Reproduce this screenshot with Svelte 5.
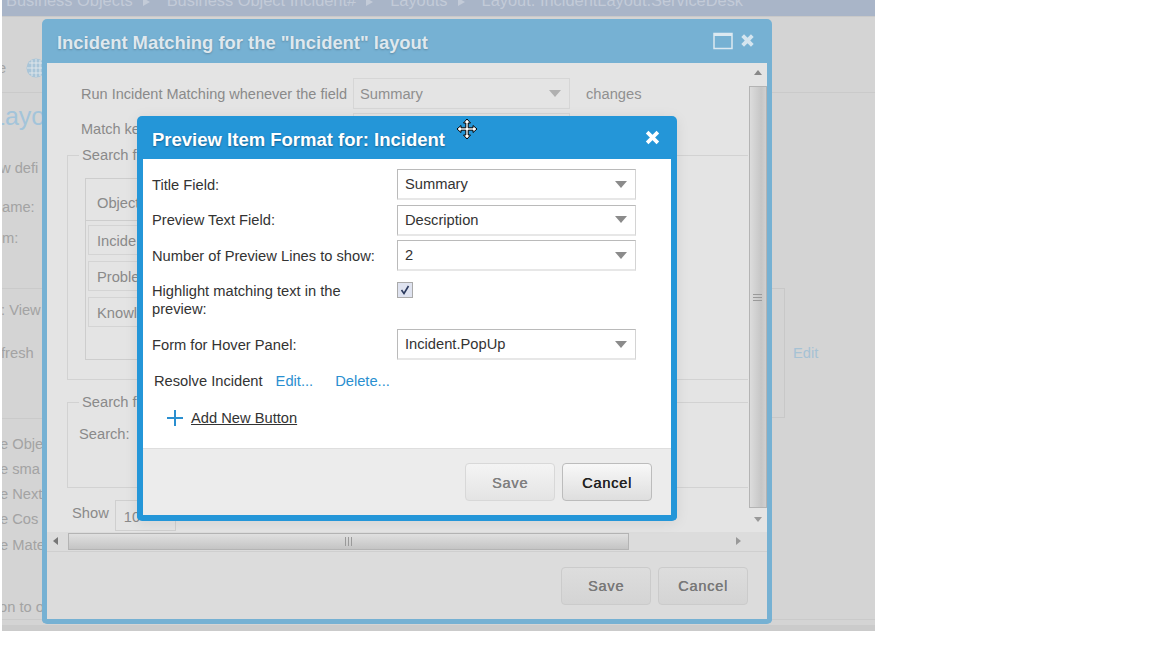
<script>
  const sideRows = [
    { text: 'e Obje', top: 436 },
    { text: 'e sma', top: 461 },
    { text: 'e Next', top: 486 },
    { text: 'e Cos', top: 511 },
    { text: 'e Mate', top: 537 }
  ];
  const objects = ['Incide', 'Proble', 'Knowl'];
  const selects = [
    { label: 'Title Field:', value: 'Summary' },
    { label: 'Preview Text Field:', value: 'Description' },
    { label: 'Number of Preview Lines to show:', value: '2' }
  ];
</script>

<div class="stage">
  <div class="crumbs">
    <span>Business Objects</span><i class="sep"></i>
    <span>Business Object Incident#</span><i class="sep"></i>
    <span>Layouts</span><i class="sep"></i>
    <span>Layout: IncidentLayout.ServiceDesk</span>
  </div>
  <div class="rule r1"></div>
  <div class="back-e bg">e</div>
  <svg class="globe" viewBox="0 0 20 20"><circle cx="10" cy="10" r="9.500" fill="#a9c5d8"/><path d="M1 10h18M10 1v18M3 5h14M3 15h14M6 2v16M14 2v16" stroke="#dfe6ea" stroke-width="1" fill="none"/></svg>
  <div class="bg layo">Layo</div>
  <div class="bg t1">w defi</div>
  <div class="bg t2">ame:</div>
  <div class="bg t3">m:</div>
  <div class="bg t4">: View</div>
  <div class="bg t5">fresh</div>
  <div class="rule r2"></div>
  <div class="rule r3"></div>
  {#each sideRows as row}
    <div class="bg side" style="top:{row.top}px">{row.text}</div>
  {/each}
  <div class="bg t6">on to o</div>
  <div class="band"></div>
  <div class="edit-box"></div>
  <div class="bg edit-link">Edit</div>

  <section class="dialog outer">
    <header class="outer-head">
      <h2>Incident Matching for the "Incident" layout</h2>
      <svg class="max" viewBox="0 0 20 18"><path d="M1 1.500h18v15H1z" fill="none" stroke="#dce9f1" stroke-width="1.500"/><path d="M1 3h18" stroke="#dce9f1" stroke-width="2"/></svg>
      <svg class="x dim" viewBox="0 0 14 14"><path d="M2.500 2.500l9 9M11.500 2.500l-9 9" stroke="#d5e5ef" stroke-width="3.600"/></svg>
    </header>
    <div class="outer-main">
      <div class="scroll-area">
        <div class="line first">
          <span class="lab">Run Incident Matching whenever the field</span>
          <div class="sel ghost"><span>Summary</span><i class="arrow"></i></div>
          <span class="changes">changes</span>
        </div>
        <div class="line second">
          <span class="lab">Match ke</span>
          <div class="sel ghost"></div>
        </div>
        <fieldset class="group g1">
          <legend>Search f</legend>
          <div class="table">
            <div class="thead">Object</div>
            {#each objects as o}
              <div class="obj">{o}</div>
            {/each}
          </div>
        </fieldset>
        <fieldset class="group g2">
          <legend>Search f</legend>
          <div class="search">Search:</div>
        </fieldset>
        <div class="show"><span>Show</span><div class="show-box">10</div></div>
      </div>
      <div class="vbar">
        <i class="tri up"></i>
        <div class="vthumb"><b></b><b></b><b></b></div>
        <i class="tri down"></i>
      </div>
      <div class="hbar">
        <i class="tri left"></i>
        <div class="hthumb"><b></b><b></b><b></b></div>
        <i class="tri right"></i>
      </div>
    </div>
    <footer class="outer-foot">
      <button class="btn off">Save</button>
      <button class="btn off">Cancel</button>
    </footer>
  </section>

  <section class="dialog inner">
    <header class="inner-head">
      <h3>Preview Item Format for: Incident</h3>
      <svg class="x" viewBox="0 0 14 14"><path d="M2 2l10 10M12 2L2 12" stroke="#fff" stroke-width="3.400"/></svg>
    </header>
    <div class="inner-main">
      {#each selects as s}
        <div class="row">
          <label>{s.label}</label>
          <div class="sel"><span>{s.value}</span><i class="arrow"></i></div>
        </div>
      {/each}
      <div class="row check-row">
        <label>Highlight matching text in the preview:</label>
        <svg class="check" viewBox="0 0 16 16"><rect x=".5" y=".5" width="15" height="15" fill="#dfe3f0" stroke="#aaa"/><path d="M4.500 8l2.500 3.500L11.500 4" fill="none" stroke="#2b3a5e" stroke-width="1.600"/></svg>
      </div>
      <div class="row">
        <label>Form for Hover Panel:</label>
        <div class="sel"><span>Incident.PopUp</span><i class="arrow"></i></div>
      </div>
      <div class="action">
        <span>Resolve Incident</span>
        <a href="#edit">Edit...</a>
        <a href="#delete">Delete...</a>
      </div>
      <div class="add">
        <svg viewBox="0 0 16 16"><path d="M8 0v16M0 8h16" stroke="#2a8fd0" stroke-width="2"/></svg>
        <span>Add New Button</span>
      </div>
    </div>
    <footer class="inner-foot">
      <button class="btn off-light">Save</button>
      <button class="btn on">Cancel</button>
    </footer>
  </section>

  <svg class="cursor" viewBox="0 0 22 22">
    <path d="M11 1l3.500 4H12.200v4.800H17V7.500l4 3.500-4 3.500v-2.300h-4.800V17h2.300L11 21l-3.500-4h2.300v-4.800H5v2.300L1 11l4-3.500v2.300h4.800V5H7.500z" fill="#fff" stroke="#000" stroke-width="1"/>
  </svg>
</div>

<style>
  :global(body) {
    margin: 0;
    background: #fff;
    font-family: "Liberation Sans", Arial, sans-serif;
    font-size: 14.7px;
  }
  .stage {
    position: relative;
    margin-left: 2px;
    width: 873px;
    height: 631px;
    overflow: hidden;
    background: #d4d4d4;
    color: #a3a3a3;
  }
  .crumbs {
    height: 16px;
    background: #a9b5c8;
    color: #c3cbd8;
    display: flex;
    align-items: center;
    padding-left: 4px;
    font-size: 16.4px;
    line-height: 4px;
    box-shadow: 0 1px 0 #c9c9c9;
  }
  .crumbs span { position: relative; top: -8px; white-space: nowrap; }
  .sep {
    width: 0; height: 0;
    border-left: 7px solid #c3cbd8;
    border-top: 4px solid transparent;
    border-bottom: 4px solid transparent;
    position: relative;
    top: -6px;
    margin: 0 17px 0 10px;
  }
  .bg { position: absolute; white-space: nowrap; }
  .rule { position: absolute; height: 1px; left: 0; right: 0; background: #cacaca; }
  .r1 { top: 92px; }
  .r2 { top: 288px; width: 40px; right: auto; }
  .r3 { top: 418px; width: 40px; right: auto; }
  .band { position: absolute; left: 0; right: 0; top: 619px; height: 12px; box-sizing: border-box; border-top: 1px solid #cacaca; background: linear-gradient(#d4d4d4 0, #d4d4d4 5px, #cbcbcb 5px); }
  .back-e { top: 60px; left: -4px; }
  .globe { position: absolute; left: 24px; top: 58px; width: 20px; height: 20px; }
  .layo { left: -11px; top: 102px; font-size: 25px; color: #a3c4da; }
  .t1 { left: -2px; top: 160px; }
  .t2 { left: 0; top: 199px; }
  .t3 { left: 0; top: 230px; }
  .t4 { left: -1px; top: 302px; }
  .t5 { left: -1px; top: 345px; }
  .side { left: -2px; }
  .t6 { left: -3px; top: 599px; }
  .edit-box { position: absolute; left: 760px; top: 288px; width: 23px; height: 130px; box-sizing: border-box; border: 1px solid #c8c8c8; }
  .edit-link { left: 791px; top: 345px; color: #a6c2d4; }

  .dialog {
    position: absolute;
    box-sizing: border-box;
    display: flex;
    flex-direction: column;
    border-style: solid;
    border-radius: 5px;
  }
  .outer {
    left: 40px; top: 19px; width: 730px; height: 605px;
    border-width: 0 5px 5px;
    border-color: #76b1d3;
    background: #dcdcdc;
  }
  .outer-head {
    height: 44px;
    flex: none;
    background: #76b1d3;
    display: flex;
    align-items: center;
    padding: 4px 12px 0 10px;
    box-sizing: border-box;
  }
  h2 {
    margin: 0;
    flex: 1;
    font-size: 18.4px;
    font-weight: bold;
    color: #dfe8ee;
    text-shadow: 0 1px 2px #5d8aa5;
  }
  .max { width: 20px; height: 18px; margin-right: 7px; margin-top: -4px; }
  .x { width: 15px; height: 15px; margin-top: -5px; }
  .outer-main {
    position: relative;
    height: 489px;
    flex: none;
    box-sizing: border-box;
    background: #dcdcdc;
    border-bottom: 1px solid #cfcfcf;
  }
  .scroll-area {
    box-sizing: border-box;
    width: 701px;
    height: 469px;
    background: #e4e4e4;
    padding-left: 34px;
    position: relative;
    overflow: hidden;
    color: #8a8a8a;
  }
  .line { display: flex; align-items: center; white-space: nowrap; gap: 5px; }
  .lab { width: 267px; flex: none; font-size: 14.5px; }
  .line.first { padding-top: 15px; }
  .line.second { padding-top: 4px; }
  .changes { margin-left: 11px; color: #909090; }
  .sel {
    box-sizing: border-box;
    width: 239px;
    height: 31px;
    border: 1px solid #bababa;
    border-bottom: 2px solid #e7e7e7;
    border-right: 1px solid #d4d4d4;
    background: #fff;
    padding: 0 7px;
    display: flex;
    align-items: center;
    justify-content: space-between;
    color: #333;
    flex: none;
  }
  .sel.ghost {
    width: 217px;
    padding-left: 6px;
    background: #e4e4e4;
    border: 1px solid #d6d6d6;
    color: #8f8f8f;
  }
  .arrow {
    width: 0; height: 0;
    border-top: 7px solid #8b8b8b;
    border-left: 6px solid transparent;
    border-right: 6px solid transparent;
    margin-right: 1px;
  }
  .ghost .arrow { border-top-color: #b0b0b0; }
  fieldset.group {
    position: absolute;
    margin: 0;
    padding: 0;
    border: 1px solid #d2d2d2;
    box-sizing: border-box;
  }
  legend { padding: 0 3px; margin-left: 11px; color: #8a8a8a; }
  .g1 { left: 20px; top: 84px; width: 700px; height: 233px; }
  .g2 { left: 20px; top: 331px; width: 700px; height: 94px; }
  .table {
    margin: 15px 0 0 17px;
    width: 200px;
    height: 182px;
    border: 1px solid #cdcdcd;
    box-sizing: border-box;
    padding: 0 2px;
  }
  .thead { height: 41px; line-height: 49px; padding-left: 11px; margin: 0 -2px 4px; border-bottom: 1px solid #cdcdcd; box-sizing: content-box; }
  .obj { height: 30px; line-height: 30px; margin-bottom: 6px; padding-left: 8px; border: 1px solid #d4d4d4; box-sizing: border-box; }
  .search { margin: 16px 0 0 11px; }
  .show {
    position: absolute; left: 25px; top: 437px;
    display: flex; gap: 6px; align-items: center;
  }
  .show span { position: relative; top: -3px; }
  .show-box { width: 61px; height: 31px; line-height: 33px; box-sizing: border-box; border: 1px solid #cfcfcf; padding-left: 8px; }
  .vbar {
    position: absolute; right: 0; top: 0; width: 19px; height: 469px;
    background: #e4e4e4;
    display: flex; flex-direction: column; align-items: center;
  }
  .vthumb {
    box-sizing: border-box;
    flex: none;
    width: 18px; height: 422px; margin: 11px 0 9px;
    background: linear-gradient(to right, #dcdcdc, #c6c6c6 70%, #d0d0d0);
    border: 1px solid #b4b4b4;
    display: flex; flex-direction: column; align-items: center; justify-content: center; gap: 2px;
  }
  .vthumb b { width: 9px; height: 1px; background: #9a9a9a; }
  .hbar {
    position: absolute; left: 0; right: 19px; top: 469px; height: 18px;
    display: flex; align-items: center;
  }
  .hthumb {
    box-sizing: border-box;
    flex: none;
    width: 561px; height: 17px; margin-left: 10px;
    background: linear-gradient(#e0e0e0, #c4c4c4);
    border: 1px solid #b4b4b4;
    display: flex; align-items: center; justify-content: center; gap: 2px;
  }
  .hthumb b { width: 1px; height: 9px; background: #9a9a9a; }
  .tri { width: 0; height: 0; flex: none; }
  .up { border-bottom: 5px solid #888; border-left: 4px solid transparent; border-right: 4px solid transparent; margin-top: 7px; }
  .down { border-top: 5px solid #999; border-left: 4px solid transparent; border-right: 4px solid transparent; }
  .left { border-right: 5px solid #777; border-top: 4px solid transparent; border-bottom: 4px solid transparent; margin-left: 6px; }
  .right { border-left: 5px solid #999; border-top: 4px solid transparent; border-bottom: 4px solid transparent; margin-left: 107px; }
  .outer-foot, .inner-foot {
    flex: 1;
    display: flex;
    justify-content: flex-end;
    align-items: center;
    gap: 7px;
    padding-right: 19px;
  }
  .btn {
    box-sizing: border-box;
    width: 90px;
    height: 38px;
    border-radius: 4px;
    font: 14.500px "Liberation Sans", Arial, sans-serif;
    letter-spacing: 0.8px;
    padding: 1px 0 0;
    text-shadow: 0.4px 0 0 currentColor;
  }
  .btn.off { color: #787878; background: linear-gradient(#dddddd, #d4d4d4); border: 1px solid #cbcbcb; }
  .btn.off-light { color: #7f7f7f; background: linear-gradient(#f4f4f4, #e4e4e4); border: 1px solid #d8d8d8; }
  .btn.on { color: #222; background: linear-gradient(#f8f8f8, #dedede); border: 1px solid #bcbcbc; }

  .inner {
    left: 135px; top: 116px; width: 540px; height: 405px;
    border-width: 0 6px 6px;
    border-color: #2496d8;
    background: #ececec;
    box-shadow: 0 2px 14px rgba(0,0,0,.08);
  }
  .inner-head {
    height: 43px;
    flex: none;
    background: #2496d8;
    display: flex;
    align-items: center;
    padding: 4px 11px 0 9px;
    box-sizing: border-box;
  }
  h3 {
    margin: 0;
    flex: 1;
    font-size: 18.5px;
    font-weight: bold;
    color: #fff;
    text-shadow: 0 1px 2px #145f8e;
  }
  .inner-main {
    height: 290px;
    flex: none;
    box-sizing: border-box;
    background: #fff;
    padding: 10px 0 0 9px;
    border-bottom: 1px solid #dedede;
    color: #333;
  }
  .row {
    display: grid;
    grid-template-columns: 245px 239px;
    align-items: center;
    margin-bottom: 4.500px;
  }
  .row label { line-height: 18px; max-width: 228px; }
  .check-row { align-items: start; margin-top: 11px; margin-bottom: 11px; }
  .check { width: 16px; height: 16px; }
  .action { display: flex; padding: 8px 0 0 2px; }
  .action a { color: #2a8fd0; text-decoration: none; margin-left: 13px; }
  .action a + a { margin-left: 22px; }
  .add { display: flex; align-items: center; gap: 8px; padding: 21px 0 0 15px; }
  .add svg { width: 16px; height: 16px; }
  .add span { text-decoration: underline; }
  .cursor { position: absolute; left: 454px; top: 118px; width: 22px; height: 22px; }
</style>
